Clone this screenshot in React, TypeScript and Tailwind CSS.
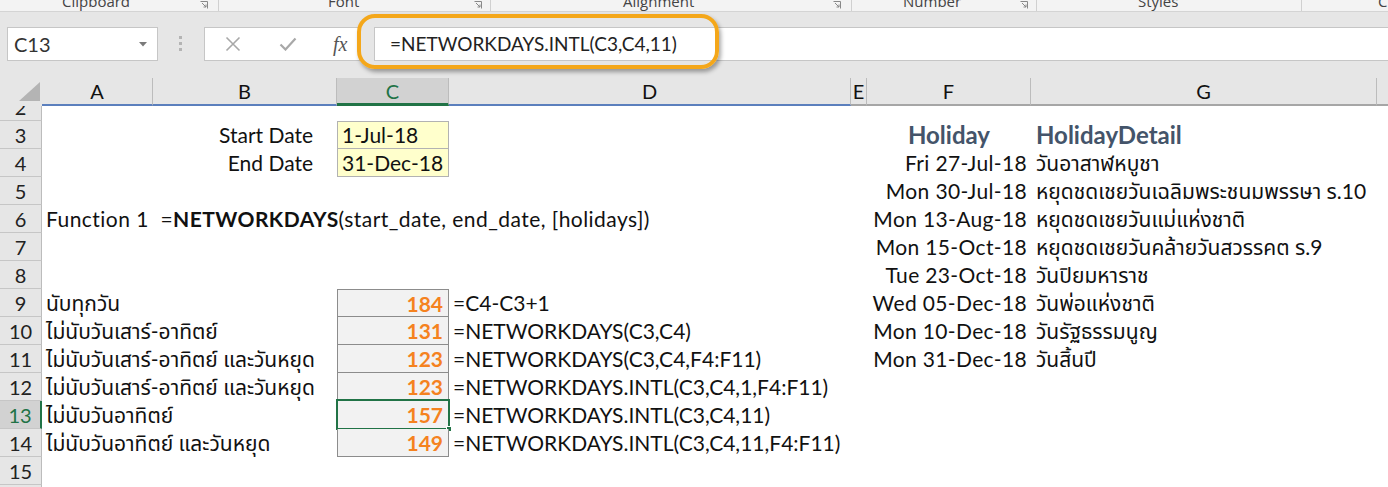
import React from "react";

const F = "font-[family-name:Lato,'Noto_Sans_Thai','Noto_Sans',sans-serif]";

function RowHead({ n, sel }: { n: number; sel?: boolean }) {
  return (
    <div
      className={
        sel
          ? "w-[42px] shrink-0 flex items-center justify-center text-[20px] bg-[#d2d2d2] text-[#217346] border-b border-b-[#c6c6c6] border-r-2 border-r-[#217346]"
          : "w-[42px] shrink-0 flex items-center justify-center text-[20px] bg-[#e6e6e6] text-[#222] border-b border-b-[#c6c6c6] border-r border-r-[#bcbcbc]"
      }
    >
      {n}
    </div>
  );
}

type RowProps = {
  n: number;
  sel?: boolean;
  a?: React.ReactNode;
  b?: React.ReactNode;
  c?: React.ReactNode;
  d?: React.ReactNode;
  f?: React.ReactNode;
  g?: React.ReactNode;
  cClass?: string;
  fClass?: string;
  selected?: boolean;
};

function Row(p: RowProps) {
  return (
    <div className="flex h-[28px] leading-[28px] text-[21px] text-[#111]">
      <RowHead n={p.n} sel={p.sel} />
      <div className="w-[111px] shrink-0 pl-[4px] whitespace-pre">{p.a}</div>
      <div className="w-[184px] shrink-0 pr-[24px] text-right whitespace-pre">{p.b}</div>
      <div className={"w-[112px] shrink-0 relative whitespace-pre " + (p.cClass ?? "")}>
        {p.c}
        {p.selected && (
          <div className="absolute -left-[2px] -top-[2px] -right-[2px] -bottom-[2px] border-2 border-[#217346]">
            <div className="absolute -right-[4px] -bottom-[4px] w-[6px] h-[6px] bg-[#217346] border border-white" />
          </div>
        )}
      </div>
      <div className="w-[402px] shrink-0 pl-[4px] whitespace-pre">{p.d}</div>
      <div className="w-[16px] shrink-0" />
      <div className={"w-[164px] shrink-0 whitespace-pre " + (p.fClass ?? "pr-[4px] text-right tracking-[0.35px]")}>{p.f}</div>
      <div className="w-[346px] shrink-0 pl-[5px] whitespace-pre">{p.g}</div>
      <div className="flex-1" />
    </div>
  );
}

function Launcher() {
  return (
    <svg width="8" height="8" viewBox="0 0 8 8" className="mt-[1px]">
      <path d="M0.5 0.5 H7.5 V7.5" fill="none" stroke="#888" strokeWidth="1" />
      <path d="M2 2 L6 6 M6 3.5 V6 H3.5" fill="none" stroke="#888" strokeWidth="1" />
    </svg>
  );
}

const num = "text-right pr-[5px] font-bold text-[#f5821f]";
const numCell = "bg-[#f2f2f2] border-x border-b border-[#8c8c8c] leading-[27px]";

const holidays: [string, string][] = [
  ["Fri 27-Jul-18", "วันอาสาฬหบูชา"],
  ["Mon 30-Jul-18", "หยุดชดเชยวันเฉลิมพระชนมพรรษา ร.10"],
  ["Mon 13-Aug-18", "หยุดชดเชยวันแม่แห่งชาติ"],
  ["Mon 15-Oct-18", "หยุดชดเชยวันคล้ายวันสวรรคต ร.9"],
  ["Tue 23-Oct-18", "วันปิยมหาราช"],
  ["Wed 05-Dec-18", "วันพ่อแห่งชาติ"],
  ["Mon 10-Dec-18", "วันรัฐธรรมนูญ"],
  ["Mon 31-Dec-18", "วันสิ้นปี"],
];

export default function App() {
  const cols: { l: string; w: string; sel?: boolean; blue: boolean }[] = [
    { l: "A", w: "w-[111px]", blue: true },
    { l: "B", w: "w-[184px]", blue: true },
    { l: "C", w: "w-[112px]", sel: true, blue: true },
    { l: "D", w: "w-[402px]", blue: true },
    { l: "E", w: "w-[16px]", blue: false },
    { l: "F", w: "w-[164px]", blue: false },
    { l: "G", w: "w-[346px]", blue: false },
  ];

  return (
    <div className={"w-[1388px] h-[487px] overflow-hidden bg-white " + F}>
      {/* Ribbon group labels strip */}
      <div className="h-[12px] flex bg-[#f3f3f3] border-b border-[#d4d4d4] overflow-hidden text-[15px] leading-[15px] text-[#444] font-[family-name:'Open_Sans',sans-serif]">
        <div className="w-[219px] shrink-0 flex items-start border-r border-[#d0d0d0]">
          <span className="pl-[62px] -mt-[6px]">Clipboard</span>
          <div className="ml-auto mr-[10px]"><Launcher /></div>
        </div>
        <div className="w-[272px] shrink-0 flex items-start border-r border-[#d0d0d0]">
          <span className="pl-[109px] -mt-[6px]">Font</span>
          <div className="ml-auto mr-[8px]"><Launcher /></div>
        </div>
        <div className="w-[361px] shrink-0 flex items-start border-r border-[#d0d0d0]">
          <span className="pl-[132px] -mt-[6px]">Alignment</span>
          <div className="ml-auto mr-[10px]"><Launcher /></div>
        </div>
        <div className="w-[185px] shrink-0 flex items-start border-r border-[#d0d0d0]">
          <span className="pl-[51px] -mt-[6px]">Number</span>
          <div className="ml-auto mr-[8px]"><Launcher /></div>
        </div>
        <div className="w-[265px] shrink-0 flex items-start border-r border-[#d0d0d0]">
          <span className="pl-[101px] -mt-[6px]">Styles</span>
        </div>
        <div className="flex-1 flex items-start">
          <span className="pl-[76px] -mt-[6px]">C</span>
        </div>
      </div>

      {/* Formula bar area */}
      <div className="relative h-[66px] bg-[#e6e6e6] flex items-start pt-[15px]">
        <div className="ml-[7px] w-[151px] h-[34px] shrink-0 bg-white border border-[#c6c6c6] flex items-center justify-between pl-[6px] pr-[10px]">
          <span className="text-[20px] text-[#333]">C13</span>
          <svg width="8" height="5" viewBox="0 0 8 5"><path d="M0 0 H8 L4 4.5 Z" fill="#7a7a7a" /></svg>
        </div>
        <div className="ml-[21px] mt-[9px] flex flex-col gap-[3px] shrink-0">
          <div className="w-[3px] h-[3px] bg-[#b4b4b4]" />
          <div className="w-[3px] h-[3px] bg-[#b4b4b4]" />
          <div className="w-[3px] h-[3px] bg-[#b4b4b4]" />
        </div>
        <div className="ml-[22px] w-[156px] h-[34px] shrink-0 bg-white border border-[#c6c6c6] flex items-center">
          <svg width="16" height="16" viewBox="0 0 16 16" className="ml-[20px]">
            <path d="M1.5 1.5 L14.5 14.5 M14.5 1.5 L1.5 14.5" stroke="#a8a8a8" strokeWidth="1.6" />
          </svg>
          <svg width="18" height="14" viewBox="0 0 18 14" className="ml-[38px]">
            <path d="M1.5 7.5 L6.5 12.5 L16.5 1.5" fill="none" stroke="#a8a8a8" strokeWidth="2.2" />
          </svg>
          <span className="ml-[36px] text-[20px] italic text-[#555] font-[family-name:'Liberation_Serif',serif]">fx</span>
        </div>
        <div className="ml-[14px] flex-1 h-[34px] bg-white border border-[#c6c6c6] border-r-0 pl-[15px] flex items-center text-[19px] text-[#222]">
          =NETWORKDAYS.INTL(C3,C4,11)
        </div>
        <div className="absolute left-[357px] top-[2px] w-[362px] h-[55px] rounded-[18px] border-[4px] border-[#f4a71a] shadow-[2px_3px_4px_rgba(0,0,0,0.35)]" />
      </div>

      {/* Column headers */}
      <div className="flex h-[28px] bg-[#e6e6e6] text-[20px] leading-[26px]">
        <div className="w-[42px] shrink-0 relative border-b border-[#e6e6e6]">
          <svg width="42" height="27" viewBox="0 0 42 27" className="absolute left-0 top-0">
            <path d="M40 4 V23 H19 Z" fill="#b4b4b4" />
          </svg>
        </div>
        {cols.map((c) => (
          <div
            key={c.l}
            className={
              c.sel
                ? c.w + " shrink-0 text-center bg-[#d2d2d2] text-[#217346] border-r border-r-[#bcbcbc] border-b-[3px] border-b-[#217346]"
                : c.blue
                ? c.w + " shrink-0 text-center text-[#111] border-r border-r-[#bcbcbc] border-b-2 border-b-[#5b7fbd]"
                : c.w + " shrink-0 text-center text-[#111] border-r border-r-[#bcbcbc] border-b-2 border-b-[#a6a6a6]"
            }
          >
            {c.l}
          </div>
        ))}
        <div className="flex-1 border-b-2 border-b-[#a6a6a6]" />
      </div>

      {/* Row 2 (partially hidden) */}
      <div className="h-[15px] overflow-hidden">
        <div className="-mt-[13px]">
          <Row n={2} />
        </div>
      </div>

      <Row
        n={3}
        b="Start Date"
        c="1-Jul-18"
        cClass="bg-[#ffffcc] border border-[#b2b2b2] pl-[4px] leading-[26px]"
        f="Holiday"
        fClass="text-center font-bold text-[24px] text-[#44546a]"
        g={<span className="font-bold text-[24px] text-[#44546a]">HolidayDetail</span>}
      />
      <Row n={4} b="End Date" c="31-Dec-18" cClass="bg-[#ffffcc] border-x border-b border-[#b2b2b2] pl-[4px] leading-[27px]" f={holidays[0][0]} g={holidays[0][1]} />
      <Row n={5} f={holidays[1][0]} g={holidays[1][1]} />
      <Row
        n={6}
        a={
          <span className="tracking-[0.45px]">
            {"Function 1  ="}
            <b>NETWORKDAYS</b>
            {"(start_date, end_date, [holidays])"}
          </span>
        }
        f={holidays[2][0]}
        g={holidays[2][1]}
      />
      <Row n={7} f={holidays[3][0]} g={holidays[3][1]} />
      <Row n={8} f={holidays[4][0]} g={holidays[4][1]} />
      <Row n={9} a="นับทุกวัน" c={<div className={num}>184</div>} cClass={numCell + " border-t"} d="=C4-C3+1" f={holidays[5][0]} g={holidays[5][1]} />
      <Row n={10} a="ไม่นับวันเสาร์-อาทิตย์" c={<div className={num}>131</div>} cClass={numCell} d="=NETWORKDAYS(C3,C4)" f={holidays[6][0]} g={holidays[6][1]} />
      <Row n={11} a="ไม่นับวันเสาร์-อาทิตย์ และวันหยุด" c={<div className={num}>123</div>} cClass={numCell} d="=NETWORKDAYS(C3,C4,F4:F11)" f={holidays[7][0]} g={holidays[7][1]} />
      <Row n={12} a="ไม่นับวันเสาร์-อาทิตย์ และวันหยุด" c={<div className={num}>123</div>} cClass={numCell} d="=NETWORKDAYS.INTL(C3,C4,1,F4:F11)" />
      <Row n={13} sel selected a="ไม่นับวันอาทิตย์" c={<div className={num}>157</div>} cClass={numCell} d="=NETWORKDAYS.INTL(C3,C4,11)" />
      <Row n={14} a="ไม่นับวันอาทิตย์ และวันหยุด" c={<div className={num}>149</div>} cClass={numCell} d="=NETWORKDAYS.INTL(C3,C4,11,F4:F11)" />
      <Row n={15} />
      <Row n={16} />
    </div>
  );
}
